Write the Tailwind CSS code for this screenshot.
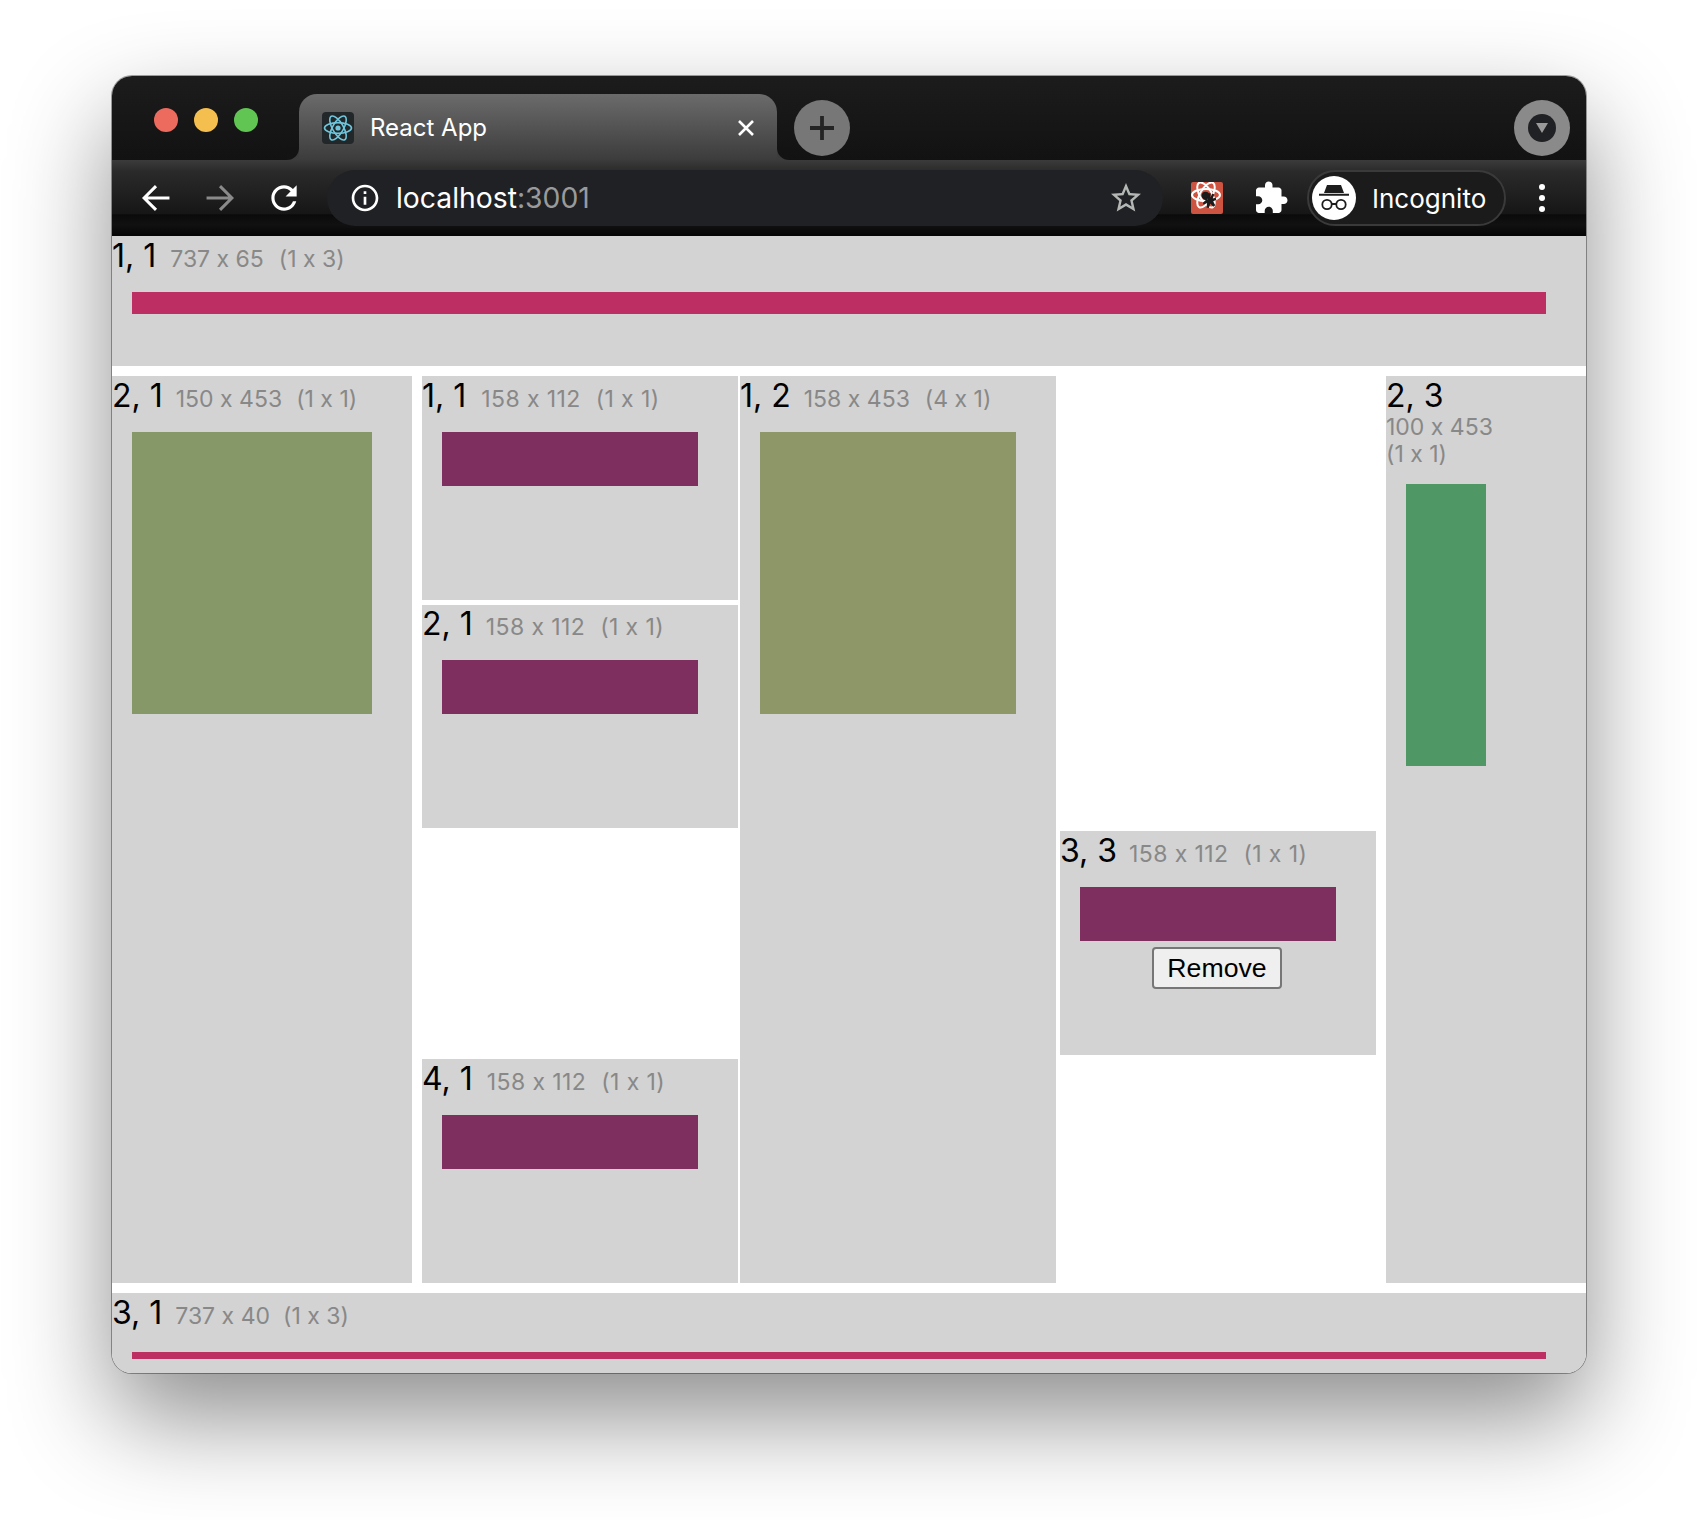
<!DOCTYPE html>
<html lang="en">
<head>
    <meta charset="UTF-8">
    <meta name="viewport" content="width=device-width, initial-scale=1.0">
    <script src="https://cdn.jsdelivr.net/npm/@tailwindcss/browser@4"></script>
    <title>React App</title>
</head>
<body class="bg-white font-['Inter',sans-serif] [font-feature-settings:'calt'_0] h-[1520px] overflow-hidden">

    <!-- browser window -->
    <div class="ml-[112px] mt-[76px] w-[1474px] h-[1297px] rounded-[20px] overflow-hidden bg-white ring-1 ring-black/35 shadow-[0_44px_100px_rgba(0,0,0,0.45)] relative top-0">

        <!-- tab strip -->
        <div class="h-[84px] flex items-start bg-[linear-gradient(#1c1c1c,#121212)]">
            <div class="flex gap-4 ml-[42px] mt-8">
                <div class="w-6 h-6 rounded-full bg-[#ed6a5e]"></div>
                <div class="w-6 h-6 rounded-full bg-[#f4bf4f]"></div>
                <div class="w-6 h-6 rounded-full bg-[#61c554]"></div>
            </div>

            <div class="relative ml-[41px] mt-[18px] w-[478px] h-[66px] rounded-t-[18px] bg-[linear-gradient(#6b6b6b,#3c3c3c)] flex items-center pl-[23px] pr-[22px] pt-[2px]">
                <div class="absolute -left-3 bottom-0 w-3 h-3 bg-[#3c3c3c]"><div class="w-3 h-3 bg-[#131313] rounded-br-xl"></div></div>
                <div class="absolute -right-3 bottom-0 w-3 h-3 bg-[#3c3c3c]"><div class="w-3 h-3 bg-[#131313] rounded-bl-xl"></div></div>
                <div class="w-8 h-8 rounded bg-[#22272a] flex items-center justify-center">
                    <svg width="30" height="30" viewBox="0 0 30 30" fill="none" stroke="#6fc6dc" stroke-width="1.6">
                        <ellipse cx="15" cy="15" rx="13.5" ry="5.4"/>
                        <ellipse cx="15" cy="15" rx="13.5" ry="5.4" transform="rotate(60 15 15)"/>
                        <ellipse cx="15" cy="15" rx="13.5" ry="5.4" transform="rotate(120 15 15)"/>
                        <circle cx="15" cy="15" r="2.6" fill="#6fc6dc" stroke="none"/>
                    </svg>
                </div>
                <span class="ml-4 text-white text-[24px] leading-none">React App</span>
                <svg class="ml-auto" width="18" height="18" viewBox="0 0 18 18" stroke="#fff" stroke-width="2.6">
                    <path d="M2 2l14 14M16 2L2 16"/>
                </svg>
            </div>

            <div class="ml-[17px] mt-6 w-14 h-14 rounded-full bg-[#777] flex items-center justify-center">
                <svg width="26" height="26" viewBox="0 0 26 26" stroke="#242424" stroke-width="3.8">
                    <path d="M13 1v24M1 13h24"/>
                </svg>
            </div>

            <div class="ml-auto mr-[16px] mt-6 w-14 h-14 rounded-full bg-[#8a8a8a] flex items-center justify-center">
                <div class="w-7 h-7 rounded-full bg-[#202124] flex items-center justify-center">
                    <svg width="14" height="12" viewBox="0 0 14 12"><path d="M1 1h12L7 11z" fill="#9a9a9a"/></svg>
                </div>
            </div>
        </div>

        <!-- toolbar -->
        <div class="h-[76px] pt-[10px] flex items-start bg-[linear-gradient(#3b3b3b_0%,#2a2a2a_15%,#1c1c1c_55%,#161616_71%,#0a0a0a_72%,#111_85%,#050505_100%)]">
            <div class="h-14 flex items-center">
                <svg class="ml-[25px]" width="38" height="38" viewBox="0 0 24 24" fill="none" stroke="#fff" stroke-width="1.9"><path d="M20.5 12H4.5M12 4.5L4.5 12l7.5 7.5"/></svg>
                <svg class="ml-[26px]" width="38" height="38" viewBox="0 0 24 24" fill="none" stroke="#8a8a8a" stroke-width="1.9"><path d="M3.5 12h16M12 4.5l7.5 7.5-7.5 7.5"/></svg>
                <svg class="ml-[26px]" width="38" height="38" viewBox="0 0 24 24" fill="#fff"><path d="M17.65 6.35C16.2 4.9 14.21 4 12 4c-4.42 0-7.99 3.58-7.99 8s3.57 8 7.99 8c3.73 0 6.84-2.55 7.73-6h-2.08c-.82 2.33-3.04 4-5.65 4-3.31 0-6-2.69-6-6s2.69-6 6-6c1.66 0 3.14.69 4.22 1.78L13 11h7V4l-2.35 2.35z"/></svg>
            </div>

            <div class="ml-[24px] w-[836px] h-14 rounded-full bg-[#202124] flex items-center pl-[22px] pr-[19px]">
                <svg width="32" height="32" viewBox="0 0 24 24" fill="#fff"><path d="M11 7h2v2h-2zm0 4h2v6h-2zm1-9C6.48 2 2 6.48 2 12s4.48 10 10 10 10-4.48 10-10S17.52 2 12 2zm0 18c-4.41 0-8-3.59-8-8s3.59-8 8-8 8 3.59 8 8-3.59 8-8 8z"/></svg>
                <span class="ml-[15px] text-[28.3px] leading-none text-white">localhost<span class="text-[#9a9a9a]">:3001</span></span>
                <svg class="ml-auto" width="36" height="36" viewBox="0 0 24 24" fill="#b4b8b4"><path d="M22 9.24l-7.19-.62L12 2 9.19 8.63 2 9.24l5.46 4.73L5.82 21 12 17.27 18.18 21l-1.63-7.03L22 9.24zM12 15.4l-3.76 2.27 1-4.28-3.32-2.88 4.38-.38L12 6.1l1.71 4.04 4.38.38-3.32 2.88 1 4.28L12 15.4z"/></svg>
            </div>

            <div class="h-14 flex items-center">
                <div class="ml-[28px] w-8 h-8 rounded-[2px] bg-[#ce5442] flex items-center justify-center">
                    <svg width="32" height="32" viewBox="0 0 32 32">
                        <g fill="none" stroke="#fff" stroke-width="2">
                            <ellipse cx="15" cy="13" rx="14" ry="6"/>
                            <ellipse cx="15" cy="13" rx="14" ry="6" transform="rotate(60 15 13)"/>
                            <ellipse cx="15" cy="13" rx="14" ry="6" transform="rotate(120 15 13)"/>
                        </g>
                        <circle cx="14.5" cy="13.5" r="3.8" fill="#1b1b1b"/>
                        <path d="M11.5 15l4 1 1 2 1-7 2.2.4-.4 4 2-4 2 1-1.6 4 3-.6.6 2.2-3.4 1.2 2.4 4-2 1.6-3-3.4-1.4 4.6-2.4-.6.6-4.4-3.4 1.8-1-2 3-2.6-2-1z" fill="#1b1b1b"/>
                    </svg>
                </div>
                <svg class="ml-[30px]" width="36" height="36" viewBox="0 0 24 24" fill="#fff"><path d="M20.5 11H19V7c0-1.1-.9-2-2-2h-4V3.5C13 2.12 11.88 1 10.5 1S8 2.12 8 3.5V5H4c-1.1 0-1.99.9-1.99 2v3.8H3.5c1.49 0 2.7 1.21 2.7 2.7s-1.21 2.7-2.7 2.7H2V20c0 1.1.9 2 2 2h3.8v-1.5c0-1.49 1.21-2.7 2.7-2.7 1.49 0 2.7 1.21 2.7 2.7V22H17c1.1 0 2-.9 2-2v-4h1.5c1.38 0 2.5-1.12 2.5-2.5S21.88 11 20.5 11z"/></svg>

                <div class="ml-[18px] w-[199px] h-14 rounded-full border-2 border-[#3a3a3a] bg-[#1b1b1c] flex items-center pl-[3px]">
                    <div class="w-11 h-11 rounded-full bg-white">
                        <svg width="44" height="44" viewBox="0 0 44 44">
                            <path d="M15 9h14l3 8H12z" fill="#1d1d1d"/>
                            <path d="M7 18.8h30" stroke="#1d1d1d" stroke-width="2"/>
                            <g fill="none" stroke="#1d1d1d" stroke-width="1.8">
                                <circle cx="15" cy="28.5" r="4.7"/>
                                <circle cx="29" cy="28.5" r="4.7"/>
                                <path d="M19.7 28h4.6"/>
                            </g>
                        </svg>
                    </div>
                    <span class="ml-4 pt-[2px] text-white text-[26px] leading-none">Incognito</span>
                </div>

                <div class="ml-[28px] w-4 flex flex-col items-center gap-[5px]">
                    <div class="w-[6px] h-[6px] rounded-full bg-white"></div>
                    <div class="w-[6px] h-[6px] rounded-full bg-white"></div>
                    <div class="w-[6px] h-[6px] rounded-full bg-white"></div>
                </div>
            </div>
        </div>

        <!-- page -->
        <div class="flex flex-col gap-[10px]">

            <div class="h-[130px] bg-[#d3d3d3]">
                <div class="h-14 leading-[40px] whitespace-nowrap"><span class="text-[32px] text-black">1, 1</span><span class="ml-[14px] text-[23px] text-[#888]">737 x 65<span class="ml-[15px]">(1 x 3)</span></span></div>
                <div class="ml-5 w-[1414px] h-[22px] bg-[#bd2f62]"></div>
            </div>

            <div class="h-[907px] flex gap-[10px]">

                <div class="w-[300px] bg-[#d3d3d3]">
                    <div class="h-14 leading-[40px] whitespace-nowrap"><span class="text-[32px] text-black">2, 1</span><span class="ml-[13px] text-[23px] text-[#888]">150 x 453<span class="ml-[14px]">(1 x 1)</span></span></div>
                    <div class="ml-5 w-[240px] h-[282px] bg-[#879868]"></div>
                </div>

                <div class="w-[954px] grid grid-cols-[316px_316px_316px] grid-rows-[repeat(4,224px)] justify-between content-between">
                    <div class="bg-[#d3d3d3]">
                        <div class="h-14 leading-[40px] whitespace-nowrap"><span class="text-[32px] text-black">1, 1</span><span class="ml-[15px] text-[23px] text-[#888] tracking-[0.4px]">158 x 112<span class="ml-[15px]">(1 x 1)</span></span></div>
                        <div class="ml-5 w-[256px] h-[54px] bg-[#7e2f60]"></div>
                    </div>

                    <div class="row-span-4 -ml-px mr-px bg-[#d3d3d3]">
                        <div class="h-14 leading-[40px] whitespace-nowrap"><span class="text-[32px] text-black">1, 2</span><span class="ml-[13px] text-[23px] text-[#888]">158 x 453<span class="ml-[15px]">(4 x 1)</span></span></div>
                        <div class="ml-5 w-[256px] h-[282px] bg-[#8e9768]"></div>
                    </div>

                    <div class="col-start-1 row-start-2 mt-px bg-[#d3d3d3]">
                        <div class="h-[55px] leading-[38px] whitespace-nowrap"><span class="text-[32px] text-black">2, 1</span><span class="ml-[13px] text-[23px] text-[#888] tracking-[0.4px]">158 x 112<span class="ml-[15px]">(1 x 1)</span></span></div>
                        <div class="ml-5 w-[256px] h-[54px] bg-[#7e2f60]"></div>
                    </div>

                    <div class="col-start-3 row-start-3 bg-[#d3d3d3]">
                        <div class="h-14 leading-[39px] whitespace-nowrap"><span class="text-[32px] text-black">3, 3</span><span class="ml-[12px] text-[23px] text-[#888] tracking-[0.4px]">158 x 112<span class="ml-[15px]">(1 x 1)</span></span></div>
                        <div class="ml-5 w-[256px] h-[54px] bg-[#7e2f60]"></div>
                        <button class="block ml-[92px] mt-[6px] w-[130px] h-[42px] rounded-[4px] border-2 border-[#767676] bg-[#efefef] font-['Liberation_Sans',sans-serif] text-[26.67px] leading-none text-black">Remove</button>
                    </div>

                    <div class="col-start-1 row-start-4 bg-[#d3d3d3]">
                        <div class="h-14 leading-[39px] whitespace-nowrap"><span class="text-[32px] text-black">4, 1</span><span class="ml-[14px] text-[23px] text-[#888] tracking-[0.4px]">158 x 112<span class="ml-[15px]">(1 x 1)</span></span></div>
                        <div class="ml-5 w-[256px] h-[54px] bg-[#7e2f60]"></div>
                    </div>
                </div>

                <div class="w-[200px] bg-[#d3d3d3]">
                    <div class="h-[108px] pt-[2px]">
                        <div class="text-[32px] leading-[36px] text-black">2, 3</div>
                        <div class="text-[23px] leading-[27px] text-[#888]">100 x 453</div>
                        <div class="text-[23px] leading-[26px] text-[#888]">(1 x 1)</div>
                    </div>
                    <div class="ml-5 w-20 h-[282px] bg-[#509766]"></div>
                </div>
            </div>

            <div class="h-20 bg-[#d3d3d3]">
                <div class="h-[59px] leading-[40px] whitespace-nowrap"><span class="text-[32px] text-black">3, 1</span><span class="ml-[13px] text-[23px] text-[#888]">737 x 40<span class="ml-[13px]">(1 x 3)</span></span></div>
                <div class="ml-5 w-[1414px] h-[7px] bg-[#bd2f62]"></div>
            </div>
        </div>
    </div>

</body>
</html>
